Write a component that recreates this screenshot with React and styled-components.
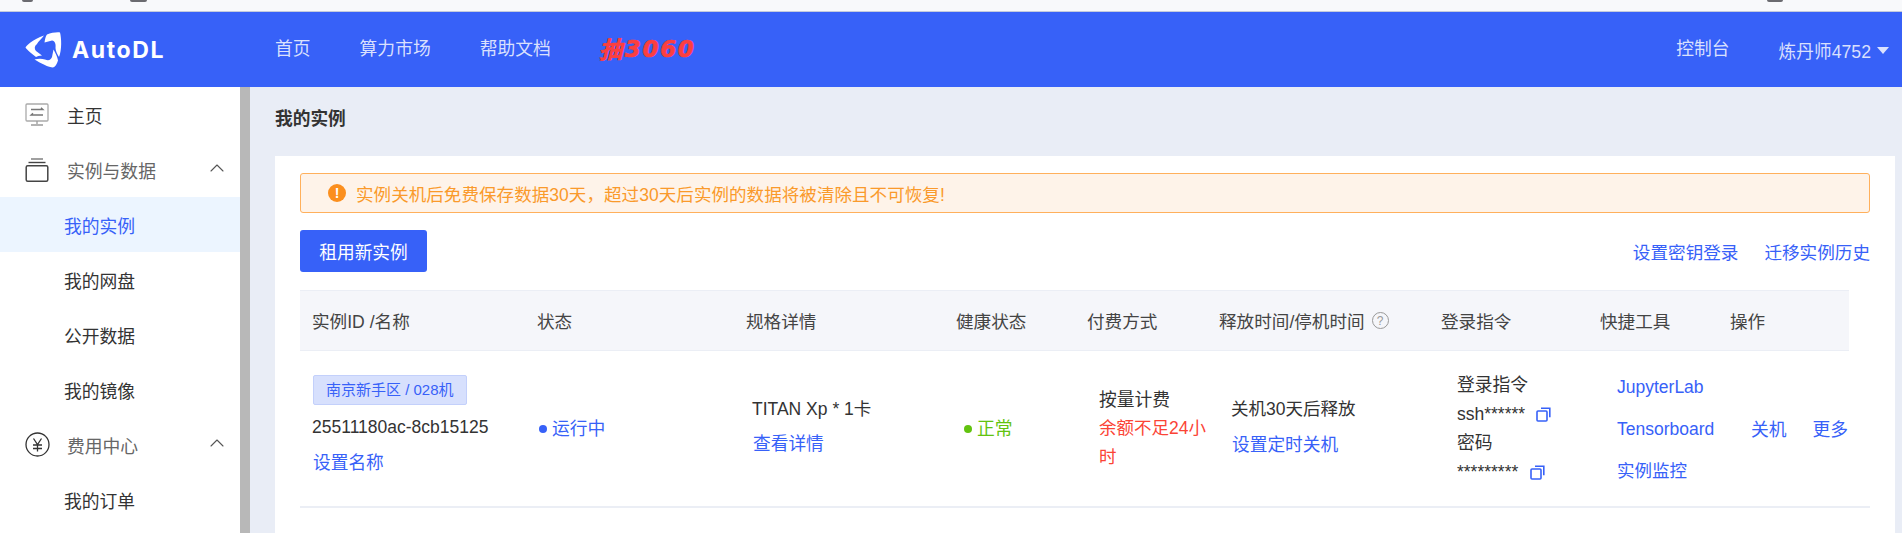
import React from "react";
import styled, { createGlobalStyle } from "styled-components";
import { ChevronUp } from "lucide-react";

const FONT = `"Liberation Sans", "Noto Sans CJK SC", sans-serif`;
const BLUE = "#3761f8";

const Global = createGlobalStyle`
  html, body { margin: 0; padding: 0; height: 533px; overflow: hidden; background: #fff; }
  body { font-family: ${FONT}; font-size: 17.5px; color: #333; }
  * { box-sizing: border-box; }
`;

const Page = styled.div`display: flex; flex-direction: column; width: 1902px; height: 533px; overflow: hidden;`;
const Strip = styled.div`
  height: 12px; flex: none; background: #f8f9fb; border-bottom: 1px solid #c3cbdc;
  display: flex; align-items: flex-start;
`;
const StripMark = styled.i`
  display: block; height: 2px; width: ${p => p.$w}px; margin-left: ${p => p.$ml}px;
  background: #6b6b70; border-radius: 0 0 3px 3px;
`;
const Header = styled.header`
  height: 75px; flex: none; background: ${BLUE}; display: flex; align-items: center;
  padding: 0 13px 0 25px; color: rgba(255,255,255,.82);
`;
const Logo = styled.div`display: flex; align-items: center; width: 250px; flex: none;`;
const LogoText = styled.span`
  font-family: Inter, sans-serif; font-weight: 700; font-size: 23px; color: #fff; margin-left: 10px; letter-spacing: 1.6px;
`;
const Nav = styled.nav`display: flex; align-items: center; gap: 49px;`;
const NavLink = styled.span`line-height: 1; font-size: 17.8px;`;
const Promo = styled.span`
  font-family: "DejaVu Sans", sans-serif; font-weight: 700; font-style: italic; font-size: 22.5px; color: #fb3f3f;
  letter-spacing: 2px; text-shadow: 1px 0 0 #c0409a; -webkit-text-stroke: .6px #fb3f3f; line-height: 1;
`;
const HeaderRight = styled.div`margin-left: auto; display: flex; align-items: center;`;
const UserName = styled.span`margin-left: 49px; font-size: 17.7px;`;
const Caret = styled.i`
  display: block; width: 0; height: 0; margin-left: 6px; margin-top: 2px;
  border-left: 6px solid transparent; border-right: 6px solid transparent; border-top: 7px solid rgba(255,255,255,.82);
`;
const Body = styled.div`flex: 1; display: flex; min-height: 0;`;
const Sidebar = styled.aside`width: 240px; flex: none; background: #fff;`;
const Scroll = styled.div`width: 10px; flex: none; background: #b8b8b8;`;
const GroupRow = styled.div`
  height: 55px; display: flex; align-items: center; padding-left: 25px; position: relative; font-size: 17.8px;
  color: ${p => (p.$dark ? "#333" : "#666")};
`;
const IconBox = styled.span`width: 42px; flex: none; display: flex; align-items: center;`;
const Chevron = styled(ChevronUp)`position: absolute; left: 205px; top: 14px; color: #555;`;
const SubRow = styled.div`
  height: 55px; display: flex; align-items: center; padding-left: 64px; font-size: 17.8px;
  color: ${p => (p.$active ? BLUE : "#333")};
  background: ${p => (p.$active ? "#ecf5ff" : "transparent")};
`;
const Main = styled.main`flex: 1; background: #e9edf6; padding: 0 7px 0 25px; min-width: 0;`;
const Title = styled.h1`margin: 0; height: 69px; font-size: 17.7px; font-weight: 700; color: #333; line-height: 65px;`;
const Card = styled.section`background: #fff; height: 400px; padding: 17px 25px 0;`;
const Alert = styled.div`
  height: 40px; background: #fef3e9; border: 1px solid #ffb05c; border-radius: 3px;
  display: flex; align-items: center; padding-left: 27px; color: #fa9a2b; letter-spacing: .07px;
`;
const AlertDot = styled.i`
  width: 18px; height: 18px; border-radius: 50%; background: #fb8f1e; color: #fff; font-style: normal;
  font-size: 14px; font-weight: 700; display: flex; align-items: center; justify-content: center; margin-right: 10px;
`;
const Toolbar = styled.div`display: flex; align-items: center; justify-content: space-between; margin: 17px 0 18px;`;
const Primary = styled.button`
  width: 127px; height: 42px; border: 0; border-radius: 3px; background: ${BLUE}; color: #fff;
  font: 17.7px ${FONT}; padding: 0;
`;
const LinkGroup = styled.div`display: flex; gap: 26px;`;
const Link = styled.span`color: ${BLUE}; font-size: 17.6px;`;
const RowLink = styled.div`color: ${BLUE}; font-size: 17.7px; margin-left: 1px;`;
const Head = styled.div`
  width: 1549px; height: 61px; display: grid; align-items: center; font-size: 17.6px;
  grid-template-columns: 225px 209px 210px 131px 132px 222px 159px 130px 131px;
  background: #f5f6fa; border-top: 1px solid #ebeef5; border-bottom: 1px solid #ebeef5; color: #444;
`;
const HeadCell = styled.div`padding-left: 12px; display: flex; align-items: center; white-space: nowrap;`;
const Help = styled.span`
  width: 17px; height: 17px; border-radius: 50%; border: 1px solid #999; color: #999; margin-left: 7px;
  font-size: 12px; display: flex; align-items: center; justify-content: center;
`;
const Row = styled.div`
  height: 157px; display: grid; align-items: center;
  grid-template-columns: 227px 213px 212px 135px 132px 226px 160px 134px 131px;
  border-bottom: 2px solid #ebeef5; color: #333;
`;
const Cell = styled.div`padding: 0 0 ${p => p.$pb ?? 0}px 12px; line-height: ${p => p.$lh ?? 36}px;`;
const Tag = styled.span`
  display: inline-flex; align-items: center; height: 30px; padding: 0 12px; margin-left: 1px; margin-bottom: 4px;
  background: #d7e0fd; border: 1px solid #c3d0fb; border-radius: 2px; color: ${BLUE}; font-size: 15px;
`;
const Status = styled.span`display: inline-flex; align-items: center; color: ${p => p.$color}; font-size: 17.8px;`;
const Dot = styled.i`width: 8px; height: 8px; border-radius: 50%; background: currentColor; margin-right: 5px;`;
const Danger = styled.div`color: #fb4436; width: 112px; line-height: 28.5px;`;
const Fee = styled.div`line-height: 28.5px; font-size: 17.8px;`;
const CopyLine = styled.div`
  display: flex; align-items: center; gap: ${p => p.$gap}px; line-height: 29px;
  font-size: ${p => (p.$cjk ? 17.8 : 17.5)}px;
`;
const ToolLink = styled.div`color: ${BLUE}; line-height: 42px; white-space: nowrap;`;
const Actions = styled.div`display: flex; gap: 26px; padding-left: 12px; color: ${BLUE}; font-size: 17.8px; margin-top: 1px; padding-bottom: 2px;`;

const LogoMark = () => (
  <svg width="37" height="36" viewBox="0 0 37 36" fill="#fff">
    <path d="M0.5 15.5C1 14 8 7 19 3.5C17 6.5 13 9.5 12 12C9.5 14 9 16.5 11 19L17 23.5C14 24 12.5 24 11 25C7 22 2 18 0.5 15.5Z" />
    <path d="M22 2.5C26 1 31.5 0 35 0.5C36.5 6 37 18 34 25C32.5 22.5 30.5 19 30.5 16C31 12 30 9 27 8.5L19.5 10.5C20 7 20.5 4.5 22 2.5Z" />
    <path d="M33 28.5C32 32 30 35 28 35.5C24 35.5 15 31 9.5 27.5C13 26.5 17 26.5 20 27.5C23.5 29 26 28 27 25L28.5 17.5C30.5 21 32.5 25 33 28.5Z" />
  </svg>
);
const BoardIcon = () => (
  <svg width="24" height="24" viewBox="0 0 24 24" fill="none" stroke="#9a9a9a" strokeWidth="1.3">
    <rect x="1" y="1" width="22" height="17" rx="1" stroke="#aaa" />
    <path d="M12 18v3M6 22h12" />
    <path d="M6 6.5h12M16 4.7l2 1.8-2 0M18 12H6M8 10.2L6 12l2 0" stroke="#777" />
  </svg>
);
const StackIcon = () => (
  <svg width="24" height="24" viewBox="0 0 24 24" fill="none" stroke="#444">
    <path d="M6 1h12" strokeWidth="1.4" stroke="#777" />
    <path d="M3.5 4.5h17" strokeWidth="1.4" />
    <rect x="1.2" y="7.7" width="21.6" height="15.5" rx="1.5" strokeWidth="1.5" />
  </svg>
);
const YenIcon = () => (
  <svg width="25" height="25" viewBox="0 0 25 25" fill="none" stroke="#333" strokeWidth="1.3">
    <circle cx="12.5" cy="12.5" r="11.5" />
    <path d="M8.5 6.5l4 6 4-6M8 13h9M8 16.5h9M12.5 12.5v7" />
  </svg>
);
const CopyIcon = () => (
  <svg width="15" height="15" viewBox="0 0 15 15" fill="none" stroke={BLUE} strokeWidth="1.6">
    <rect x="1" y="4" width="10" height="10" rx="1" />
    <path d="M5 1.2h8.8v9" />
  </svg>
);

const headCols = ["实例ID /名称", "状态", "规格详情", "健康状态", "付费方式", "释放时间/停机时间", "登录指令", "快捷工具", "操作"];

export default function App() {
  return (
    <Page>
      <Global />
      <Strip>
        <StripMark $w={11} $ml={22} />
        <StripMark $w={17} $ml={97} />
        <StripMark $w={16} $ml={1620} />
      </Strip>
      <Header>
        <Logo>
          <LogoMark />
          <LogoText>AutoDL</LogoText>
        </Logo>
        <Nav>
          <NavLink>首页</NavLink>
          <NavLink>算力市场</NavLink>
          <NavLink>帮助文档</NavLink>
          <Promo>抽3060</Promo>
        </Nav>
        <HeaderRight>
          <NavLink>控制台</NavLink>
          <UserName>炼丹师4752</UserName>
          <Caret />
        </HeaderRight>
      </Header>
      <Body>
        <Sidebar>
          <GroupRow $dark><IconBox><BoardIcon /></IconBox>主页</GroupRow>
          <GroupRow><IconBox><StackIcon /></IconBox>实例与数据<Chevron size={24} strokeWidth={1.1} /></GroupRow>
          <SubRow $active>我的实例</SubRow>
          <SubRow>我的网盘</SubRow>
          <SubRow>公开数据</SubRow>
          <SubRow>我的镜像</SubRow>
          <GroupRow><IconBox><YenIcon /></IconBox>费用中心<Chevron size={24} strokeWidth={1.1} /></GroupRow>
          <SubRow>我的订单</SubRow>
        </Sidebar>
        <Scroll />
        <Main>
          <Title>我的实例</Title>
          <Card>
            <Alert><AlertDot>!</AlertDot>实例关机后免费保存数据30天，超过30天后实例的数据将被清除且不可恢复!</Alert>
            <Toolbar>
              <Primary>租用新实例</Primary>
              <LinkGroup><Link>设置密钥登录</Link><Link>迁移实例历史</Link></LinkGroup>
            </Toolbar>
            <Head>
              {headCols.map((c, i) => (
                <HeadCell key={c}>{c}{i === 5 && <Help>?</Help>}</HeadCell>
              ))}
            </Head>
            <Row>
              <Cell $pb={5}>
                <Tag>南京新手区 / 028机</Tag>
                <div>25511180ac-8cb15125</div>
                <RowLink>设置名称</RowLink>
              </Cell>
              <Cell $pb={2}><Status $color={BLUE}><Dot />运行中</Status></Cell>
              <Cell $pb={4} $lh={35}>
                <div>TITAN Xp * 1卡</div>
                <RowLink>查看详情</RowLink>
              </Cell>
              <Cell $pb={2}><Status $color="#62c30f"><Dot />正常</Status></Cell>
              <Cell>
                <Fee>按量计费</Fee>
                <Danger>余额不足24小时</Danger>
              </Cell>
              <Cell $pb={3} $lh={36}>
                <div>关机30天后释放</div>
                <RowLink>设置定时关机</RowLink>
              </Cell>
              <Cell>
                <CopyLine $cjk>登录指令</CopyLine>
                <CopyLine $gap={11}>ssh******<CopyIcon /></CopyLine>
                <CopyLine $cjk>密码</CopyLine>
                <CopyLine $gap={12}>*********<CopyIcon /></CopyLine>
              </Cell>
              <Cell>
                <ToolLink>JupyterLab</ToolLink>
                <ToolLink>Tensorboard</ToolLink>
                <ToolLink>实例监控</ToolLink>
              </Cell>
              <Actions><span>关机</span><span>更多</span></Actions>
            </Row>
          </Card>
        </Main>
      </Body>
    </Page>
  );
}
